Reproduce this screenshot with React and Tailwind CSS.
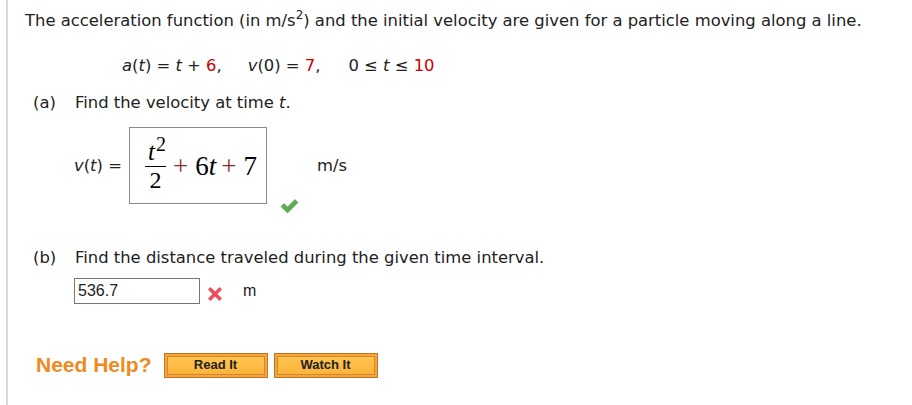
import React from 'react';

function HelpButton({ label }) {
  return (
    <button className="w-[104px] h-[25px] border border-[#c0741f] bg-[#f5a53a] p-[2px]">
      <span className="flex h-full w-full items-center justify-center border border-[#d2862e] bg-gradient-to-b from-[#ffc44f] to-[#fbb43b] font-[Liberation_Sans,Arial,sans-serif] text-[13px] font-bold text-[#222]">
        {label}
      </span>
    </button>
  );
}

function Check() {
  return (
    <svg width="19" height="16" viewBox="0 0 19 16">
      <path d="M1 8.5 L4 5.5 L7.5 9 L15 1.5 L18 4.5 L7.5 15 Z" fill="#5cae4f" stroke="#4f9a43" strokeWidth="0.6" />
    </svg>
  );
}

function Cross() {
  return (
    <svg width="16" height="16" viewBox="0 0 16 16">
      <path d="M1 3.5 L3.5 1 L8 5.5 L12.5 1 L15 3.5 L10.5 8 L15 12.5 L12.5 15 L8 10.5 L3.5 15 L1 12.5 L5.5 8 Z" fill="#ee4d5c" />
    </svg>
  );
}

export default function App() {
  return (
    <div className="w-[912px] h-[405px] bg-white pl-[6px] font-[DejaVu_Sans,Verdana,sans-serif] text-[16.4px] text-[#222]">
      <div className="h-full border-l-2 border-[#d8d8d8] pl-[17px] pt-[10px]">
        <p className="leading-[22px]">
          The acceleration function (in m/s<sup className="relative -top-[1px] align-super text-[12px] leading-none">2</sup>) and the initial velocity are given for a particle moving along a line.
        </p>

        <div className="mt-[23px] flex pl-[97px] leading-[22px] whitespace-pre">
          <span>
            <i>a</i>(<i>t</i>) = <i>t</i> + <span className="text-[#cc0000]">6</span>,
          </span>
          <span className="ml-[26px]">
            <i>v</i>(0) = <span className="text-[#cc0000]">7</span>,
          </span>
          <span className="ml-[28px]">
            0 ≤ <i>t</i> ≤ <span className="text-[#cc0000]">10</span>
          </span>
        </div>

        <div className="mt-[15px] flex leading-[22px]">
          <span className="w-[50px] pl-[8px]">(a)</span>
          <span>
            Find the velocity at time <i>t</i>.
          </span>
        </div>

        <div className="mt-[13px] flex items-center pl-[49px]">
          <span className="w-[55px]">
            <i>v</i>(<i>t</i>) =
          </span>
          <div className="flex h-[77px] w-[138px] items-center border border-[#8a8a8a] pl-[15px] font-[Liberation_Serif,Times_New_Roman,serif] text-[27px] text-black">
            <span className="flex flex-col items-center pt-[2px]">
              <span className="pl-[3px] text-[25px] leading-[24px]">
                <i>t</i>
                <span className="relative -top-[9px] ml-[1px] text-[20px]">2</span>
              </span>
              <span className="mt-[1px] h-[1px] w-[21px] bg-black" />
              <span className="text-[24px] leading-[26px]">2</span>
            </span>
            <span className="ml-[7px] text-[#8b2b2b]">+</span>
            <span className="ml-[7px]">
              6<i>t</i>
            </span>
            <span className="ml-[5px] text-[#8b2b2b]">+</span>
            <span className="ml-[7px]">7</span>
          </div>
          <div className="relative w-[50px] self-stretch">
            <div className="absolute left-[13px] bottom-[-10px]">
              <Check />
            </div>
          </div>
          <span>m/s</span>
        </div>

        <div className="mt-[43px] flex leading-[22px]">
          <span className="w-[50px] pl-[8px]">(b)</span>
          <span>Find the distance traveled during the given time interval.</span>
        </div>

        <div className="mt-[9px] flex items-center pl-[49px] font-[Liberation_Sans,Arial,sans-serif] text-[16px]">
          <div className="flex h-[26px] w-[126px] items-center border border-[#767676] pl-[3px]">
            536.7
          </div>
          <span className="ml-[7px] mt-[6px]">
            <Cross />
          </span>
          <span className="ml-[20px]">m</span>
        </div>

        <div className="mt-[45px] flex items-center pl-[11px]">
          <span className="font-[Liberation_Sans,Arial,sans-serif] text-[21px] font-bold text-[#f08a1e]">Need Help?</span>
          <span className="ml-[12px] flex">
            <HelpButton label="Read It" />
          </span>
          <span className="ml-[6px] flex">
            <HelpButton label="Watch It" />
          </span>
        </div>
      </div>
    </div>
  );
}
